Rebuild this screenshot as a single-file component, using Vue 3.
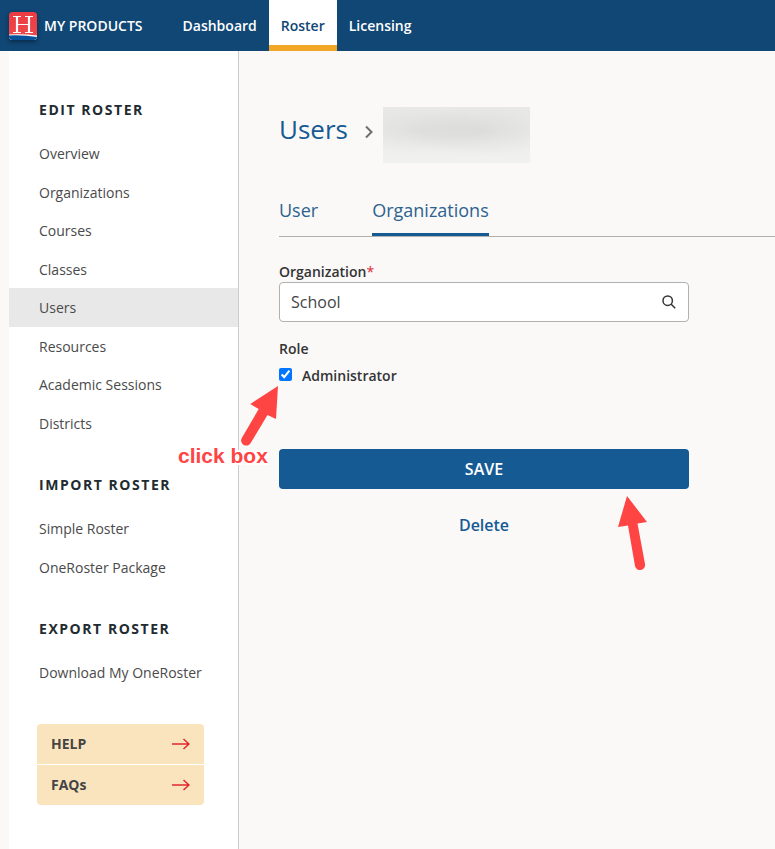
<script setup>
import { ref } from 'vue'

const navGroups = [
  {
    title: 'EDIT ROSTER',
    items: ['Overview', 'Organizations', 'Courses', 'Classes', 'Users', 'Resources', 'Academic Sessions', 'Districts'],
  },
  { title: 'IMPORT ROSTER', items: ['Simple Roster', 'OneRoster Package'] },
  { title: 'EXPORT ROSTER', items: ['Download My OneRoster'] },
]
const helpLinks = ['HELP', 'FAQs']
const currentItem = 'Users'

const organization = ref('School')
const isAdministrator = ref(true)
</script>

<template>
  <div class="page">
    <header class="topbar">
      <a href="#" class="brand">
        <svg class="logo" viewBox="0 0 28 28" aria-hidden="true">
          <defs>
            <linearGradient id="logoRed" x1="0" y1="0" x2="0" y2="1">
              <stop offset="0" stop-color="#ec3b41" />
              <stop offset="1" stop-color="#f04a4d" />
            </linearGradient>
            <clipPath id="logoShape"><rect width="28" height="28" rx="3" /></clipPath>
          </defs>
          <g clip-path="url(#logoShape)">
            <rect width="28" height="28" fill="url(#logoRed)" />
            <path d="M0 22.500Q14 21.500 28 23.500V28H0Z" fill="#fff" />
            <path d="M0 23.500Q14 22.800 28 25V28H0Z" fill="#07509a" />
          </g>
          <path
            d="M4 4.500H12M4 20.500H12M16 4.500H24M16 20.500H24"
            stroke="#fff" stroke-width="1" fill="none"
          />
          <path d="M8 4.500V20.500M20 4.500V20.500" stroke="#fff" stroke-width="2.200" fill="none" />
          <path d="M8 12.500H20" stroke="#fff" stroke-width="1.200" fill="none" />
        </svg>
        <span>MY PRODUCTS</span>
      </a>
      <nav class="topnav">
        <a href="#">Dashboard</a>
        <a href="#" class="active" aria-current="page">Roster</a>
        <a href="#">Licensing</a>
      </nav>
    </header>

    <div class="body">
      <aside class="sidebar">
        <section v-for="group in navGroups" :key="group.title" class="group">
          <h2>{{ group.title }}</h2>
          <ul>
            <li v-for="item in group.items" :key="item">
              <a href="#" :class="{ current: item === currentItem }">{{ item }}</a>
            </li>
          </ul>
        </section>
        <div class="help">
          <a v-for="link in helpLinks" :key="link" href="#">
            <span>{{ link }}</span>
            <svg class="arrow" viewBox="0 0 18 12" aria-hidden="true">
              <path d="M0 6H17M11.500 1L17 6L11.500 11" />
            </svg>
          </a>
        </div>
      </aside>

      <main class="content">
        <div class="crumbs">
          <h1><a href="#">Users</a></h1>
          <svg class="chevron" viewBox="0 0 10 14" aria-hidden="true">
            <path d="M2 1.500L7.500 7L2 12.500" />
          </svg>
          <span class="redacted"></span>
        </div>

        <nav class="tabs">
          <a href="#">User</a>
          <a href="#" class="active" aria-current="page">Organizations</a>
        </nav>

        <form class="form" @submit.prevent>
          <label class="label" for="organization">Organization<span class="required">*</span></label>
          <div class="search">
            <input id="organization" v-model="organization" type="text" />
            <svg viewBox="0 0 14 14" aria-hidden="true">
              <circle cx="5.700" cy="5.700" r="4.700" />
              <path d="M9 9L13.200 13.200" />
            </svg>
          </div>

          <fieldset class="role">
            <legend class="label">Role</legend>
            <div class="check">
              <input id="administrator" v-model="isAdministrator" type="checkbox" />
              <label class="label" for="administrator">Administrator</label>
              <div class="note note-check">
                <svg viewBox="0 0 38 62" aria-hidden="true">
                  <path d="M37 1L9.300 19L17.700 24L0.800 53A5 5 0 0 0 9.700 58L26.500 30L35 34Z" />
                </svg>
                <span>click box</span>
              </div>
            </div>
          </fieldset>

          <div class="save-row">
            <button type="submit" class="save">SAVE</button>
            <div class="note note-save">
              <svg viewBox="0 0 30 76" aria-hidden="true">
                <path d="M10 1L1 32L11 30.500L18 71A5 5 0 0 0 28 69L20.500 28.500L30 27Z" />
              </svg>
            </div>
          </div>
          <button type="button" class="delete">Delete</button>
        </form>
      </main>
    </div>
  </div>
</template>

<style>
body {
  margin: 0;
  background: #faf9f8;
}
</style>

<style scoped>
.page {
  display: flex;
  flex-direction: column;
  min-height: 100vh;
  overflow-x: hidden;
  font-family: "Open Sans", "Noto Sans", sans-serif;
  font-size: 14px;
  color: #333;
  background: #faf9f8;
}
a {
  color: inherit;
  text-decoration: none;
}
.topbar {
  display: flex;
  height: 51px;
  padding-left: 9px;
  background: #104775;
  color: #fff;
  font-weight: 600;
}
.brand {
  display: flex;
  align-items: center;
  gap: 7px;
  margin-right: 28px;
}
.logo {
  width: 28px;
  height: 28px;
  border-radius: 3px;
  box-shadow: 0 2px 4px rgba(0, 0, 0, 0.4);
}
.topnav {
  display: flex;
}
.topnav a {
  display: flex;
  align-items: center;
  padding: 0 12px;
}
.topnav .active {
  box-shadow: inset 0 -6px #f2a826;
  background: #fff;
  color: #104775;
}
.body {
  display: flex;
  flex: 1;
}
.sidebar {
  flex: none;
  box-sizing: border-box;
  width: 230px;
  margin-left: 9px;
  padding: 16px 0 44px;
  border-right: 1px solid #ccc;
  background: #fff;
}
.group h2 {
  margin: 0;
  padding: 32px 0 13px 30px;
  font-size: 14px;
  line-height: 22px;
  font-weight: 700;
  letter-spacing: 0.11em;
  color: #222b30;
}
.group ul {
  margin: 0;
  padding: 0;
  list-style: none;
}
.group li a {
  display: block;
  padding: 11px 0 10px 30px;
  line-height: 1.25;
  color: #4a4a4a;
}
.group li .current {
  background: #e8e8e8;
}
.help {
  display: flex;
  flex-direction: column;
  gap: 1px;
  margin: 32px 34px 0 28px;
  border-radius: 4px;
  overflow: hidden;
}
.help a {
  display: flex;
  align-items: center;
  justify-content: space-between;
  height: 40px;
  padding: 0 14px;
  background: #fae4be;
  font-weight: 700;
  color: #444;
}
.arrow {
  width: 18px;
  height: 12px;
  fill: none;
  stroke: #e0282e;
  stroke-width: 1.5;
}
.content {
  flex: 1;
  min-width: 0;
  padding: 56px 0 40px 40px;
}
.crumbs {
  display: flex;
  height: 56px;
}
.crumbs h1 {
  margin: 0;
  font-size: 26px;
  line-height: 44px;
  font-weight: 400;
  color: #165a94;
}
.chevron {
  width: 10px;
  height: 14px;
  margin: 18px 9px 0 16px;
  fill: none;
  stroke: #6e6e6e;
  stroke-width: 2;
}
.redacted {
  width: 147px;
  background:
    radial-gradient(ellipse at 25% 42%, rgba(200, 200, 199, 0.35), transparent 50%),
    radial-gradient(ellipse at 68% 42%, rgba(200, 200, 199, 0.4), transparent 55%),
    linear-gradient(#e8e8e7, #f1f1f0);
}
.tabs {
  display: flex;
  gap: 54px;
  margin-top: 30px;
  border-bottom: 1px solid #b0b0b0;
  font-size: 18px;
  line-height: 34px;
  color: #2d628f;
}
.tabs a {
  padding-bottom: 6px;
  border-bottom: 3px solid transparent;
}
.tabs .active {
  border-color: #165a94;
}
.form {
  display: flex;
  flex-direction: column;
  max-width: 410px;
  margin-top: 25px;
}
.label {
  font-size: 14px;
  line-height: 20px;
  font-weight: 600;
}
.required {
  font-weight: 400;
  color: #e0282e;
}
.search {
  display: flex;
  align-items: center;
  box-sizing: border-box;
  height: 40px;
  padding: 0 12px 0 11px;
  border: 1px solid #b0b0b0;
  border-radius: 4px;
  background: #fff;
}
.search input {
  flex: 1;
  min-width: 0;
  padding: 0;
  border: 0;
  outline: 0;
  background: none;
  font: inherit;
  font-size: 16px;
  color: #444;
}
.search svg {
  width: 14px;
  height: 14px;
  fill: none;
  stroke: #333;
  stroke-width: 1.5;
}
.role {
  margin: 17px 0 0;
  padding: 0;
  border: 0;
}
.role legend {
  padding: 0;
}
.check {
  position: relative;
  display: flex;
  align-items: center;
  gap: 10px;
  margin-top: 7px;
}
.check input {
  width: 13px;
  height: 13px;
  margin: 0 0 3px;
}
.save-row {
  position: relative;
  margin-top: 63px;
}
.save,
.delete {
  border: 0;
  font: inherit;
  font-size: 16px;
  font-weight: 600;
  cursor: pointer;
}
.save {
  width: 100%;
  height: 40px;
  border-radius: 4px;
  background: #165a94;
  color: #fff;
}
.delete {
  align-self: center;
  margin-top: 24px;
  padding: 0;
  line-height: 24px;
  background: none;
  color: #165a94;
}
.note {
  position: absolute;
  font-family: "Liberation Sans", sans-serif;
  font-size: 21px;
  line-height: 24px;
  font-weight: 700;
  color: #ff4444;
  white-space: nowrap;
  pointer-events: none;
}
.note svg {
  display: block;
  fill: #ff4444;
}
.note span {
  text-shadow: 0 0 2px #fff, 2px 0 #fff, -2px 0 #fff, 0 2px #fff, 0 -2px #fff, 2px 2px #fff, -2px -2px #fff, 2px -2px #fff, -2px 2px #fff;
}
.note-check {
  top: 19px;
  left: -101px;
}
.note-check svg {
  width: 38px;
  height: 62px;
  margin: 0 0 -3px 63px;
}
.note-save {
  top: 46px;
  right: 42px;
}
.note-save svg {
  width: 30px;
  height: 76px;
}
</style>
